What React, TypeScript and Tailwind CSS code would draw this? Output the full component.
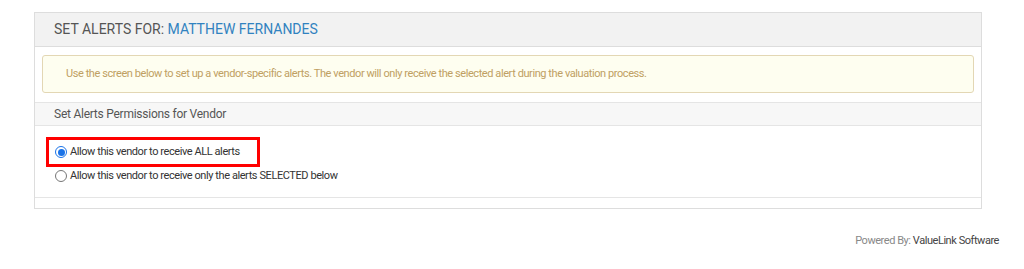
import React from "react";

function Radio({ checked }: { checked: boolean }) {
  return checked ? (
    <span className="inline-flex h-[12px] w-[12px] shrink-0 items-center justify-center rounded-full border border-[#1a73e8] bg-white">
      <span className="h-[7px] w-[7px] rounded-full bg-[#1a73e8]" />
    </span>
  ) : (
    <span className="inline-block h-[12px] w-[12px] shrink-0 rounded-full border border-[#767676] bg-white" />
  );
}

export default function App() {
  return (
    <div className="min-h-[269px] bg-white pt-[12px] font-['Roboto',sans-serif]">
      <div className="ml-[34px] w-[948px] border border-[#dddddd] bg-white">
        <div className="flex h-[34px] items-center border-b border-[#dddddd] bg-[#f2f2f2] pl-[19px] text-[14px] text-[#555555]">
          <span>SET ALERTS FOR:&nbsp;</span>
          <span className="text-[#3182c0]">MATTHEW FERNANDES</span>
        </div>
        <div className="px-[7px] pt-[8px]">
          <div className="flex h-[38px] items-center rounded-[3px] border border-[#e3d7b4] bg-[#fefef0] pl-[23px] text-[11px] tracking-[-0.42px] text-[#c0a062]">
            Use the screen below to set up a vendor-specific alerts. The vendor will only receive the selected alert during the valuation process.
          </div>
        </div>
        <div className="mt-[9px] flex h-[24px] items-center border-y border-[#e5e5e5] bg-[#f7f7f7] pl-[19px] text-[12px] tracking-[-0.25px] text-[#555555]">
          <span>Set Alerts Permissions for Vendor</span>
        </div>
        <div className="border-b border-[#e5e5e5] pb-[12px] pl-[11px] pt-[11px]">
          <div className="inline-flex h-[30px] items-center gap-[3px] border-[3px] border-[#ff0000] pl-[6px] pr-[17px] text-[11px] tracking-[-0.42px] text-[#333333]">
            <Radio checked={true} />
            <span>Allow this vendor to receive ALL alerts</span>
          </div>
          <div className="flex h-[18px] items-center gap-[3px] pl-[9px] text-[11px] tracking-[-0.42px] text-[#333333]">
            <Radio checked={false} />
            <span>Allow this vendor to receive only the alerts SELECTED below</span>
          </div>
        </div>
        <div className="h-[10px]" />
      </div>
      <div className="flex justify-end pr-[25px] pt-[24px] text-[11px] tracking-[-0.45px]">
        <span className="text-[#888888]">Powered By:&nbsp;</span>
        <span className="text-[#444444]">ValueLink Software</span>
      </div>
    </div>
  );
}
